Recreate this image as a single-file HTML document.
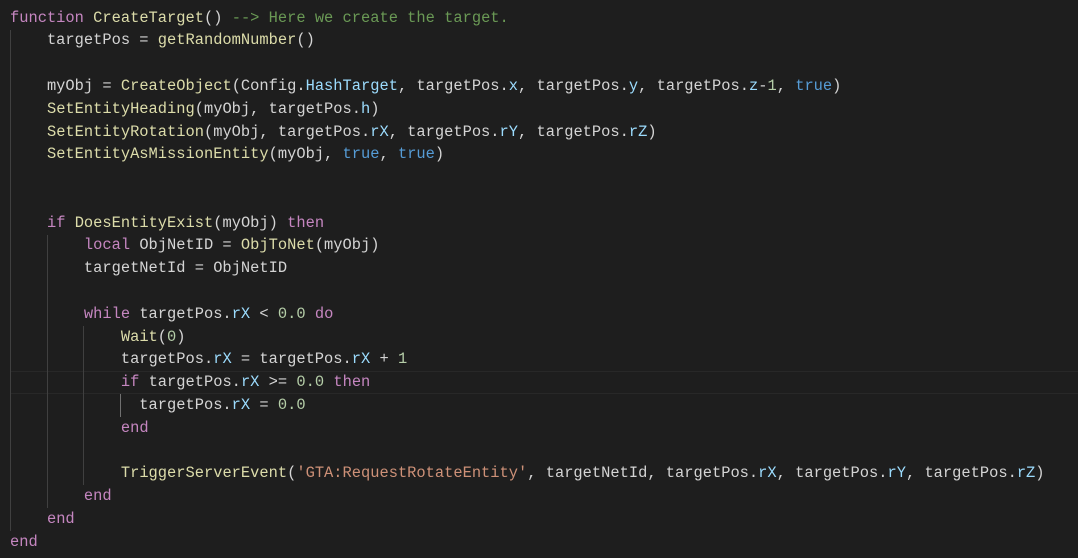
<!DOCTYPE html>
<html><head><meta charset="utf-8"><style>
html,body{margin:0;padding:0;background:#1e1e1e;width:1078px;height:558px;overflow:hidden}
#c{position:relative;width:1078px;height:558px}
.l{position:absolute;left:10px;height:22.78px;line-height:22.78px;white-space:pre;font-family:"Liberation Mono",monospace;font-size:15.4px;color:#d4d4d4}
.k{color:#c586c0}.f{color:#dcdcaa}.p{color:#9cdcfe}.n{color:#b5cea8}.b{color:#569cd6}.s{color:#ce9178}.c{color:#6a9955}
.g{position:absolute;width:1px;background:#404040}
.hl{position:absolute;left:10px;right:0;border-top:1px solid #282828;border-bottom:1px solid #282828}
</style></head><body><div id="c">
<div class="hl" style="top:371px;height:21px"></div>
<div class="g" style="left:10px;top:29.6px;height:501px"></div>
<div class="g" style="left:47px;top:235px;height:273px"></div>
<div class="g" style="left:83px;top:326px;height:159px"></div>
<div class="g" style="left:120px;top:394px;height:23px;background:#707070"></div>
<div class="l" style="top:6.6px"><span class="k">function</span> <span class="f">CreateTarget</span>() <span class="c">--&gt; Here we create the target.</span></div>
<div class="l" style="top:29.4px">    targetPos = <span class="f">getRandomNumber</span>()</div>
<div class="l" style="top:75px">    myObj = <span class="f">CreateObject</span>(Config.<span class="p">HashTarget</span>, targetPos.<span class="p">x</span>, targetPos.<span class="p">y</span>, targetPos.<span class="p">z</span>-<span class="n">1</span>, <span class="b">true</span>)</div>
<div class="l" style="top:97.7px">    <span class="f">SetEntityHeading</span>(myObj, targetPos.<span class="p">h</span>)</div>
<div class="l" style="top:120.5px">    <span class="f">SetEntityRotation</span>(myObj, targetPos.<span class="p">rX</span>, targetPos.<span class="p">rY</span>, targetPos.<span class="p">rZ</span>)</div>
<div class="l" style="top:143.3px">    <span class="f">SetEntityAsMissionEntity</span>(myObj, <span class="b">true</span>, <span class="b">true</span>)</div>
<div class="l" style="top:211.6px">    <span class="k">if</span> <span class="f">DoesEntityExist</span>(myObj) <span class="k">then</span></div>
<div class="l" style="top:234.4px">        <span class="k">local</span> ObjNetID = <span class="f">ObjToNet</span>(myObj)</div>
<div class="l" style="top:257.2px">        targetNetId = ObjNetID</div>
<div class="l" style="top:302.8px">        <span class="k">while</span> targetPos.<span class="p">rX</span> &lt; <span class="n">0.0</span> <span class="k">do</span></div>
<div class="l" style="top:325.5px">            <span class="f">Wait</span>(<span class="n">0</span>)</div>
<div class="l" style="top:348.3px">            targetPos.<span class="p">rX</span> = targetPos.<span class="p">rX</span> + <span class="n">1</span></div>
<div class="l" style="top:371.1px">            <span class="k">if</span> targetPos.<span class="p">rX</span> &gt;= <span class="n">0.0</span> <span class="k">then</span></div>
<div class="l" style="top:393.9px">              targetPos.<span class="p">rX</span> = <span class="n">0.0</span></div>
<div class="l" style="top:416.7px">            <span class="k">end</span></div>
<div class="l" style="top:462.2px">            <span class="f">TriggerServerEvent</span>(<span class="s">'GTA:RequestRotateEntity'</span>, targetNetId, targetPos.<span class="p">rX</span>, targetPos.<span class="p">rY</span>, targetPos.<span class="p">rZ</span>)</div>
<div class="l" style="top:485px">        <span class="k">end</span></div>
<div class="l" style="top:507.8px">    <span class="k">end</span></div>
<div class="l" style="top:530.6px"><span class="k">end</span></div>
</div></body></html>
